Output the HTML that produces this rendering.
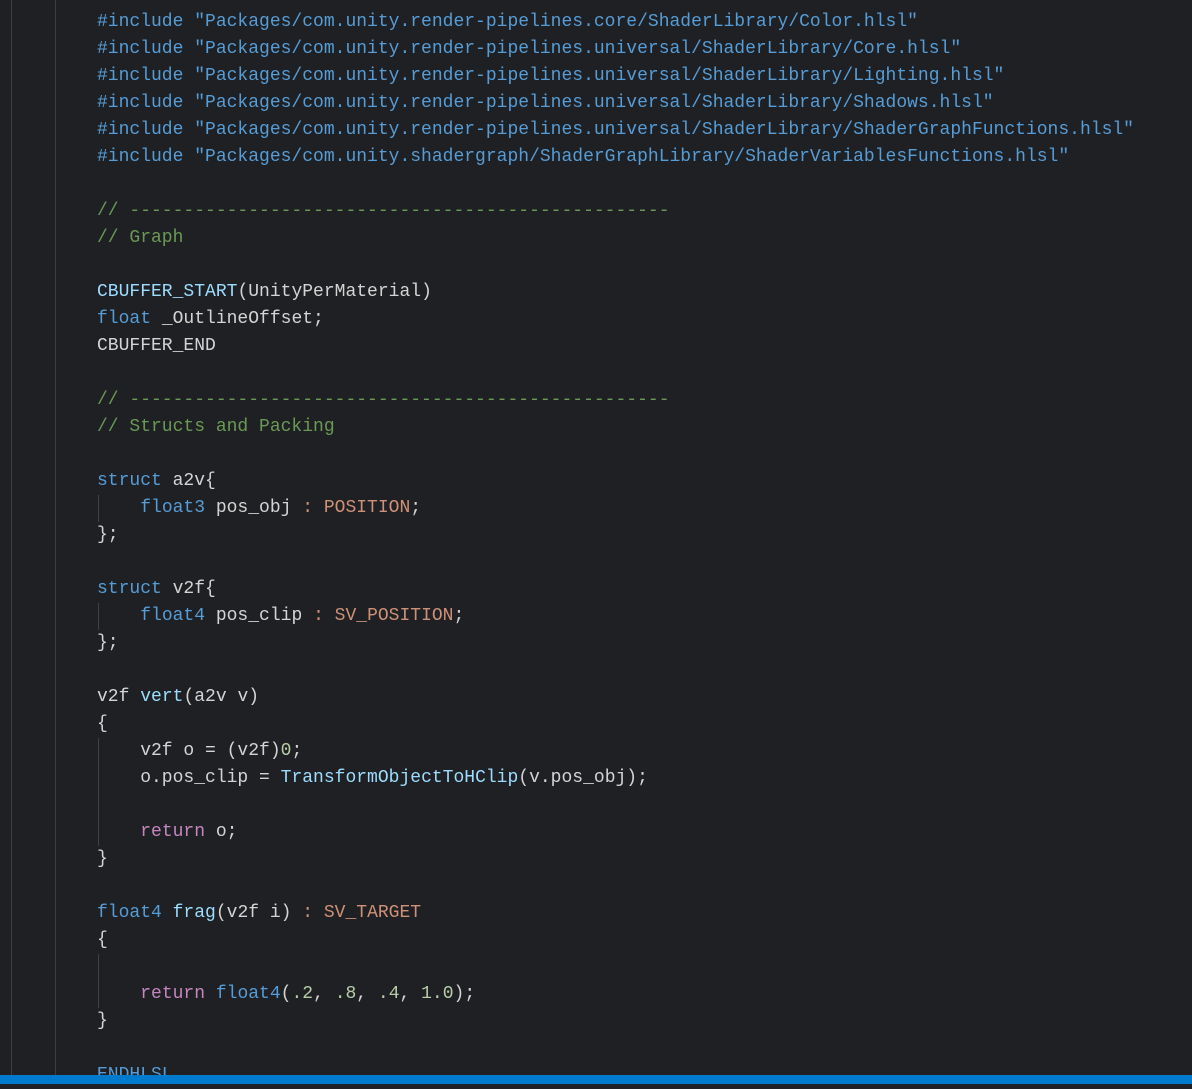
<!DOCTYPE html>
<html><head><style>
html,body{margin:0;padding:0;}
body{width:1192px;height:1084px;background:#1f2023;position:relative;overflow:hidden;font-family:"Liberation Mono",monospace;font-size:18px;color:#d4d4d4;}
.g{position:absolute;top:0;width:1px;height:1075px;background:#3c3d40;}
.ig{position:absolute;width:1px;background:#404144;left:98px;}
pre{margin:0;position:absolute;left:97px;top:-18px;line-height:27px;font-family:inherit;white-space:pre;}
.b{color:#569cd6}.c{color:#6a9955}.o{color:#ce9178}.f{color:#9cdcfe}.p{color:#c586c0}.n{color:#b5cea8}
.bar{position:absolute;left:0;top:1075px;width:1192px;height:9px;background:#007acc;}
</style></head><body>
<div class="g" style="left:11px"></div>
<div class="g" style="left:55px"></div>
<div class="ig" style="top:495px;height:27px"></div>
<div class="ig" style="top:603px;height:27px"></div>
<div class="ig" style="top:738px;height:108px"></div>
<div class="ig" style="top:954px;height:54px"></div>
<pre><span class="c">// ------------------</span>
<span class="b">#include "Packages/com.unity.render-pipelines.core/ShaderLibrary/Color.hlsl"</span>
<span class="b">#include "Packages/com.unity.render-pipelines.universal/ShaderLibrary/Core.hlsl"</span>
<span class="b">#include "Packages/com.unity.render-pipelines.universal/ShaderLibrary/Lighting.hlsl"</span>
<span class="b">#include "Packages/com.unity.render-pipelines.universal/ShaderLibrary/Shadows.hlsl"</span>
<span class="b">#include "Packages/com.unity.render-pipelines.universal/ShaderLibrary/ShaderGraphFunctions.hlsl"</span>
<span class="b">#include "Packages/com.unity.shadergraph/ShaderGraphLibrary/ShaderVariablesFunctions.hlsl"</span>

<span class="c">// --------------------------------------------------</span>
<span class="c">// Graph</span>

<span class="f">CBUFFER_START</span>(UnityPerMaterial)
<span class="b">float</span> _OutlineOffset;
CBUFFER_END

<span class="c">// --------------------------------------------------</span>
<span class="c">// Structs and Packing</span>

<span class="b">struct</span> a2v{
    <span class="b">float3</span> pos_obj <span class="o">: POSITION</span>;
};

<span class="b">struct</span> v2f{
    <span class="b">float4</span> pos_clip <span class="o">: SV_POSITION</span>;
};

v2f <span class="f">vert</span>(a2v v)
{
    v2f o = (v2f)<span class="n">0</span>;
    o.pos_clip = <span class="f">TransformObjectToHClip</span>(v.pos_obj);

    <span class="p">return</span> o;
}

<span class="b">float4</span> <span class="f">frag</span>(v2f i) <span class="o">: SV_TARGET</span>
{

    <span class="p">return</span> <span class="b">float4</span>(<span class="n">.2</span>, <span class="n">.8</span>, <span class="n">.4</span>, <span class="n">1.0</span>);
}

<span class="b">ENDHLSL</span></pre>
<div class="bar"></div>
</body></html>
